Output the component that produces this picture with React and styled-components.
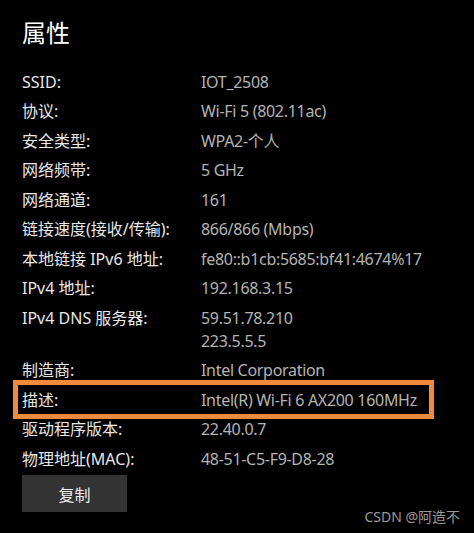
import React from 'react';
import styled, { createGlobalStyle } from 'styled-components';

const GlobalStyle = createGlobalStyle`
  html, body {
    margin: 0;
    padding: 0;
    background: #000;
  }
  body {
    font-family: "Noto Sans", "Noto Sans CJK SC", sans-serif;
  }
`;

const Page = styled.div`
  position: relative;
  width: 474px;
  height: 533px;
  box-sizing: border-box;
  padding: 17px 0 0 22px;
  background: #000;
  overflow: hidden;
`;

const Title = styled.h1`
  margin: 0 0 21.5px;
  font-size: 24px;
  line-height: 32px;
  font-weight: 400;
  color: #fff;
`;

const Row = styled.div`
  position: relative;
  display: grid;
  grid-template-columns: 179px 1fr;
  padding-bottom: ${(p) => (p.$last ? '0' : '6.5px')};
  font-size: 16px;
  line-height: 23px;

  ${(p) => p.$marked && `
    &::after {
      content: '';
      position: absolute;
      left: -9px;
      top: -8.5px;
      width: 421px;
      height: 39px;
      box-sizing: border-box;
      border: 5px solid #f08a3c;
      pointer-events: none;
    }
  `}
`;

const Label = styled.div`
  color: #e8e8e8;
`;

const Value = styled.div`
  color: #b4b4b4;
  letter-spacing: -0.3px;
  white-space: nowrap;
`;

const CopyButton = styled.button`
  display: block;
  width: 105px;
  height: 37px;
  margin-top: 4.5px;
  padding: 0;
  border: none;
  background: #333;
  color: #f0f0f0;
  font-family: inherit;
  font-size: 16px;
`;

const Watermark = styled.div`
  position: absolute;
  right: 14px;
  bottom: 8px;
  font-size: 14px;
  line-height: 16px;
  color: #9a9a9a;
`;

const rows = [
  { label: 'SSID:', value: ['IOT_2508'] },
  { label: '协议:', value: ['Wi-Fi 5 (802.11ac)'] },
  { label: '安全类型:', value: ['WPA2-个人'] },
  { label: '网络频带:', value: ['5 GHz'] },
  { label: '网络通道:', value: ['161'] },
  { label: '链接速度(接收/传输):', value: ['866/866 (Mbps)'] },
  { label: '本地链接 IPv6 地址:', value: ['fe80::b1cb:5685:bf41:4674%17'] },
  { label: 'IPv4 地址:', value: ['192.168.3.15'] },
  { label: 'IPv4 DNS 服务器:', value: ['59.51.78.210', '223.5.5.5'] },
  { label: '制造商:', value: ['Intel Corporation'] },
  { label: '描述:', value: ['Intel(R) Wi-Fi 6 AX200 160MHz'], marked: true },
  { label: '驱动程序版本:', value: ['22.40.0.7'] },
  { label: '物理地址(MAC):', value: ['48-51-C5-F9-D8-28'] },
];

const App = () => (
  <>
    <GlobalStyle />
    <Page>
      <Title>属性</Title>
      {rows.map((row, index) => (
        <Row key={row.label} $marked={row.marked} $last={index === rows.length - 1}>
          <Label>{row.label}</Label>
          <Value>
            {row.value.map((line) => (
              <div key={line}>{line}</div>
            ))}
          </Value>
        </Row>
      ))}
      <CopyButton type="button">复制</CopyButton>
      <Watermark>CSDN @阿造不</Watermark>
    </Page>
  </>
);

export default App;
